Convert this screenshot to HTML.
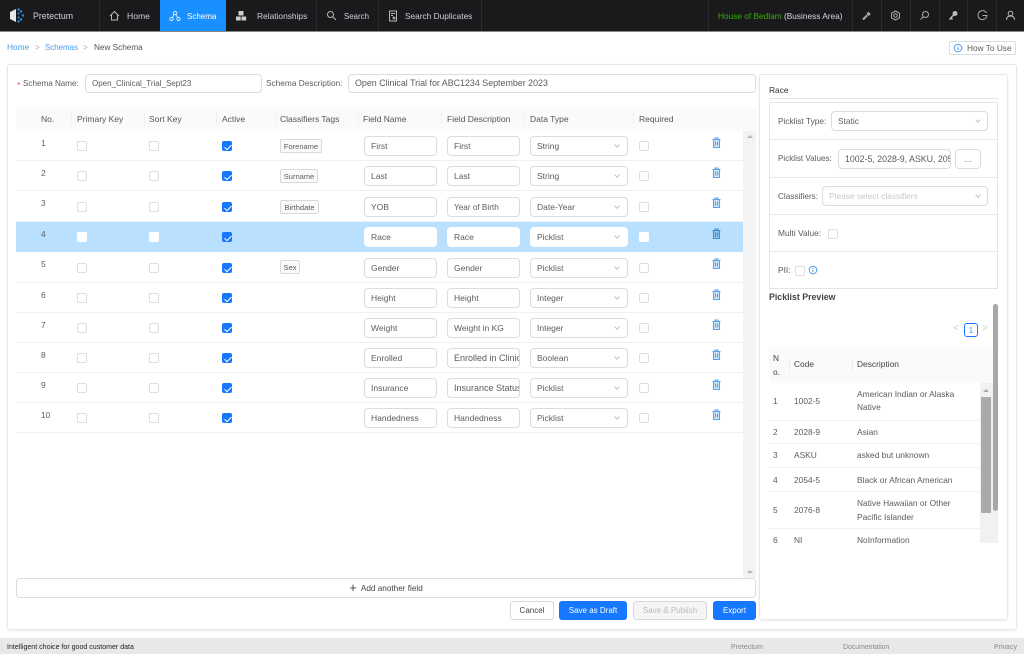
<!DOCTYPE html>
<html><head><meta charset="utf-8"><style>
*{box-sizing:border-box}
html,body{margin:0;padding:0;width:1024px;height:654px;overflow:hidden;background:#fff}
body{font:8.4px/12px "Liberation Sans",sans-serif;color:#5c5c5c;position:relative}
#w{position:absolute;left:0;top:0;width:1024px;height:654px;overflow:hidden;filter:blur(.3px)}
.t{position:absolute;white-space:nowrap;line-height:12px}
.nav{color:#cdd1d5}
.sep{position:absolute;top:0;width:1px;height:31px;background:#2b2b2e}
.ic{position:absolute;fill:none;stroke:#b8b8b8;stroke-width:1}
.th{position:absolute;top:113px;color:#555;white-space:nowrap;font-size:8.5px}
.hs{position:absolute;top:113px;width:1px;height:12px;background:#f0f0f0}
.row{position:absolute;left:16px;width:727px;height:30px;border-bottom:1px solid #f0f0f0}
.row>*{position:absolute}
.no{left:25px;top:6px}
.cb{width:10px;height:10px;border:1px solid #dedede;border-radius:2px;background:#fff;top:10px}
.on{background:#1677ff;border-color:#1677ff}
.on:after{content:"";position:absolute;left:2.500px;top:.5px;width:3px;height:6px;border:solid #fff;border-width:0 1px 1px 0;transform:rotate(45deg)}
.tag{left:264px;top:8px;height:14px;border:1px solid #d9d9d9;border-radius:2px;background:#fafafa;font-size:7.500px;line-height:13px;text-align:center}
.in{height:20px;top:5px;border:1px solid #dcdcdc;border-radius:4px;background:#fff;padding:0 6px;line-height:18px;overflow:hidden;white-space:nowrap;font-size:8.500px}
.chev{position:absolute;width:4px;height:4px;border:solid #c4c4c4;border-width:0 1px 1px 0;transform:rotate(45deg)}
.tr{left:696px;top:6px}
.box{position:absolute;border:1px solid #dcdcdc;border-radius:4px;background:#fff;line-height:18px;padding:0 6px;white-space:nowrap;overflow:hidden}
.btn{position:absolute;top:601px;height:19px;border-radius:3px;text-align:center;line-height:19px;background:#1677ff;color:#fff;font-size:8px}
.hl{position:absolute;left:770px;width:228px;height:1px;background:#e6e6e6}
.pl{position:absolute;left:769px;width:211px;height:1px;background:#f0f0f0}
</style></head><body><div id="w">

<div style="position:absolute;left:0;top:0;width:1024px;height:32px;background:#1a1a1d;border-bottom:1px solid #888"></div>
<div style="position:absolute;left:160px;top:0;width:66px;height:31px;background:#1890ff"></div>
<div class="sep" style="left:99px"></div><div class="sep" style="left:316px"></div><div class="sep" style="left:378px"></div><div class="sep" style="left:481px"></div><div class="sep" style="left:708px"></div><div class="sep" style="left:852px"></div><div class="sep" style="left:881px"></div><div class="sep" style="left:910px"></div><div class="sep" style="left:939px"></div><div class="sep" style="left:967px"></div><div class="sep" style="left:996px"></div>

<svg class="ic" style="left:8px;top:7px;stroke:none" width="17" height="17"><path d="M8 2V15L2 12V5Z" fill="#e8e8e8"/><circle cx="10.500" cy="2.500" r="1.200" fill="#2a8fe0"/><circle cx="13" cy="4.500" r="1.200" fill="#2a8fe0"/><circle cx="10.500" cy="6.500" r="1" fill="#2a8fe0"/><circle cx="15" cy="8.500" r="1.200" fill="#2a8fe0"/><circle cx="10.500" cy="10.500" r="1" fill="#2a8fe0"/><circle cx="13" cy="12.500" r="1.200" fill="#2a8fe0"/><circle cx="10.500" cy="14.500" r="1.200" fill="#2a8fe0"/></svg>
<div class="t nav" style="left:33px;top:10px;font-size:8.800px">Pretectum</div>

<svg class="ic" style="left:109px;top:10px" width="11" height="11"><path d="M1 6L5.500 1.500L10 6M2.500 5V10H8.500V5"/></svg>
<div class="t nav" style="left:127px;top:10px;font-size:8.600px">Home</div>
<svg class="ic" style="left:169px;top:10px;stroke:#cfe6ff" width="12" height="12"><circle cx="6" cy="3" r="1.600"/><circle cx="2.500" cy="9" r="1.600"/><circle cx="9.500" cy="9" r="1.600"/><path d="M5 4.500L3.500 7.500M7 4.500L8.500 7.500"/></svg>
<div class="t" style="left:187px;top:11px;color:#fff;font-size:8px">Schema</div>
<svg class="ic" style="left:235px;top:10px;stroke:none;fill:#cfcfcf" width="12" height="12"><rect x="3.500" y="1" width="5" height="4.500"/><rect x="1" y="6.500" width="4.700" height="4"/><rect x="6.500" y="6.500" width="4.700" height="4"/></svg>
<div class="t nav" style="left:257px;top:10px;font-size:8.400px">Relationships</div>
<svg class="ic" style="left:326px;top:10px" width="11" height="11"><circle cx="4.500" cy="4.500" r="3"/><path d="M7 7L10 10"/></svg>
<div class="t nav" style="left:344px;top:11px;font-size:7.900px">Search</div>
<svg class="ic" style="left:388px;top:10px" width="10" height="12"><path d="M1.500 1H8.500V11H1.500ZM3 3.500H7M3 5.500H5"/><circle cx="6" cy="8" r="1"/></svg>
<div class="t nav" style="left:405px;top:10px;font-size:8.300px">Search Duplicates</div>

<div class="t" style="left:718px;top:10px;color:#3aa80f;font-size:8.300px">House of Bedlam <span style="color:#d5d9dd">(Business Area)</span></div>

<svg class="ic" style="left:861px;top:10px;stroke:#aaa" width="11" height="11"><path d="M2 9.500L6 5.500" stroke-width="2"/><path d="M6 4L7.500 2.500L9 4L7.500 5.500Z" fill="#aaa"/></svg>
<svg class="ic" style="left:890px;top:10px;stroke:#aaa" width="11" height="11"><circle cx="5.500" cy="5.500" r="1.800"/><path d="M5.500 1L9.500 3.200V7.800L5.500 10L1.500 7.800V3.200Z"/></svg>
<svg class="ic" style="left:919px;top:10px;stroke:#aaa" width="11" height="11"><circle cx="6.500" cy="4.500" r="3"/><path d="M4.500 6.500L1.500 9.500"/></svg>
<svg class="ic" style="left:948px;top:10px;stroke:#bbb" width="11" height="11"><circle cx="7" cy="3.500" r="2" fill="#bbb"/><path d="M5.500 5L1.500 9.500M3 8L4.500 9.500" stroke-width="1.500"/></svg>
<svg class="ic" style="left:977px;top:10px;stroke:#aaa" width="11" height="11"><path d="M9.500 3A4.500 4.500 0 1 0 10 5.500H5.500"/></svg>
<svg class="ic" style="left:1005px;top:10px;stroke:#bbb" width="11" height="11"><circle cx="5.500" cy="3.500" r="2.300"/><path d="M1.500 10C1.500 7.500 3 6 5.500 6S9.500 7.500 9.500 10"/></svg>

<div class="t" style="left:7px;top:41px;color:#4a9bf0;font-size:8.300px">Home</div>
<div class="t" style="left:35px;top:42px;color:#aaa;font-size:8px">&gt;</div>
<div class="t" style="left:45px;top:42px;color:#4a9bf0;font-size:7.900px">Schemas</div>
<div class="t" style="left:83px;top:42px;color:#aaa;font-size:8px">&gt;</div>
<div class="t" style="left:94px;top:42px;color:#555;font-size:8.200px">New Schema</div>

<div class="box" style="left:949px;top:41px;width:67px;height:14px;line-height:12px;padding:0 0 0 17px;border-radius:2px;font-size:8.300px">How To Use</div>
<svg class="ic" style="left:953px;top:43px;stroke:#4a9bf0" width="10" height="10" viewBox="0 0 10 10"><circle cx="5" cy="5" r="3.800"/><path d="M5 4.500V7M5 3V3.700"/></svg>

<div style="position:absolute;left:7px;top:64px;width:1010px;height:566px;border:1px solid #e8e8e8;border-radius:3px;box-shadow:0 1px 2px rgba(0,0,0,.08)"></div>

<div class="t" style="left:17px;top:79px;color:#ff4d4f">*</div>
<div class="t" style="left:23px;top:78px;font-size:8.100px">Schema Name:</div>
<div class="box" style="left:85px;top:74px;width:177px;height:19px;line-height:17px;font-size:8px">Open_Clinical_Trial_Sept23</div>
<div class="t" style="left:266px;top:77px;font-size:8.300px">Schema Description:</div>
<div class="box" style="left:348px;top:74px;width:408px;height:19px;line-height:17px;font-size:8.900px">Open Clinical Trial for ABC1234 September 2023</div>

<div style="position:absolute;left:16px;top:107px;width:740px;height:24px;background:#fafafa"></div>
<div class="hs" style="left:71px"></div><div class="hs" style="left:144px"></div><div class="hs" style="left:216px"></div><div class="hs" style="left:275px"></div><div class="hs" style="left:358px"></div><div class="hs" style="left:441px"></div><div class="hs" style="left:524px"></div><div class="hs" style="left:633px"></div>
<div class="th" style="left:41px">No.</div><div class="th" style="left:77px">Primary Key</div><div class="th" style="left:149px">Sort Key</div><div class="th" style="left:222px">Active</div><div class="th" style="left:280px">Classifiers Tags</div><div class="th" style="left:363px">Field Name</div><div class="th" style="left:447px">Field Description</div><div class="th" style="left:530px">Data Type</div><div class="th" style="left:639px">Required</div>

<div style="position:absolute;left:743px;top:131px;width:13px;height:447px;background:#f3f3f3"></div>
<div style="position:absolute;left:747px;top:135px;border:3px solid transparent;border-top:0;border-bottom:3px solid #b5b5b5"></div>
<div style="position:absolute;left:747px;top:571px;border:3px solid transparent;border-bottom:0;border-top:3px solid #b5b5b5"></div>

<div class="row" style="top:131px"><div class="no">1</div><div class="cb" style="left:61px"></div><div class="cb" style="left:133px"></div><div class="cb on" style="left:206px"></div><div class="tag" style="width:42px">Forename</div><div class="in" style="left:348px;width:73px">First</div><div class="in" style="left:431px;width:73px">First</div><div class="in" style="left:514px;width:98px">String<i class="chev" style="left:84px;top:6px"></i></div><div class="cb" style="left:623px"></div><svg class="tr" width="9" height="11"><path d="M.5 2.500H8.500M3 2.500V1H6V2.500M1.500 2.500V10.500H7.500V2.500M3.500 4.500V8.500M5.500 4.500V8.500" fill="#cfe6fa" stroke="#5ba6ea" stroke-width="1.100"/></svg></div>
<div class="row" style="top:161px"><div class="no">2</div><div class="cb" style="left:61px"></div><div class="cb" style="left:133px"></div><div class="cb on" style="left:206px"></div><div class="tag" style="width:38px">Surname</div><div class="in" style="left:348px;width:73px">Last</div><div class="in" style="left:431px;width:73px">Last</div><div class="in" style="left:514px;width:98px">String<i class="chev" style="left:84px;top:6px"></i></div><div class="cb" style="left:623px"></div><svg class="tr" width="9" height="11"><path d="M.5 2.500H8.500M3 2.500V1H6V2.500M1.500 2.500V10.500H7.500V2.500M3.500 4.500V8.500M5.500 4.500V8.500" fill="#cfe6fa" stroke="#5ba6ea" stroke-width="1.100"/></svg></div>
<div class="row" style="top:191px;height:31px"><div class="no">3</div><div class="cb" style="left:61px;top:11px"></div><div class="cb" style="left:133px;top:11px"></div><div class="cb on" style="left:206px;top:11px"></div><div class="tag" style="width:39px;top:9px">Birthdate</div><div class="in" style="left:348px;width:73px;top:6px">YOB</div><div class="in" style="left:431px;width:73px;top:6px;font-size:8.200px;line-height:19px">Year of Birth</div><div class="in" style="left:514px;width:98px;top:6px">Date-Year<i class="chev" style="left:84px;top:6px"></i></div><div class="cb" style="left:623px;top:11px"></div><svg class="tr" width="9" height="11"><path d="M.5 2.500H8.500M3 2.500V1H6V2.500M1.500 2.500V10.500H7.500V2.500M3.500 4.500V8.500M5.500 4.500V8.500" fill="#cfe6fa" stroke="#5ba6ea" stroke-width="1.100"/></svg></div>
<div class="row" style="top:222px;background:#bae0ff;border-bottom:0"><div class="no">4</div><div class="cb" style="left:61px;border-color:#fff"></div><div class="cb" style="left:133px;border-color:#fff"></div><div class="cb on" style="left:206px"></div><div class="in" style="left:348px;width:73px;border-color:#fff">Race</div><div class="in" style="left:431px;width:73px;border-color:#fff">Race</div><div class="in" style="left:514px;width:98px;border-color:#fff">Picklist<i class="chev" style="left:84px;top:6px"></i></div><div class="cb" style="left:623px;border-color:#fff"></div><svg class="tr" width="9" height="11"><path d="M.5 2.500H8.500M3 2.500V1H6V2.500M1.500 2.500V10.500H7.500V2.500M3.500 4.500V8.500M5.500 4.500V8.500" fill="#8fc4ee" stroke="#3f8fd8" stroke-width="1.100"/></svg></div>
<div class="row" style="top:252px;height:31px"><div class="no">5</div><div class="cb" style="left:61px;top:11px"></div><div class="cb" style="left:133px;top:11px"></div><div class="cb on" style="left:206px;top:11px"></div><div class="tag" style="width:20px;top:8px">Sex</div><div class="in" style="left:348px;width:73px;top:6px">Gender</div><div class="in" style="left:431px;width:73px;top:6px">Gender</div><div class="in" style="left:514px;width:98px;top:6px">Picklist<i class="chev" style="left:84px;top:6px"></i></div><div class="cb" style="left:623px;top:11px"></div><svg class="tr" width="9" height="11"><path d="M.5 2.500H8.500M3 2.500V1H6V2.500M1.500 2.500V10.500H7.500V2.500M3.500 4.500V8.500M5.500 4.500V8.500" fill="#cfe6fa" stroke="#5ba6ea" stroke-width="1.100"/></svg></div>
<div class="row" style="top:283px"><div class="no">6</div><div class="cb" style="left:61px"></div><div class="cb" style="left:133px"></div><div class="cb on" style="left:206px"></div><div class="in" style="left:348px;width:73px">Height</div><div class="in" style="left:431px;width:73px">Height</div><div class="in" style="left:514px;width:98px">Integer<i class="chev" style="left:84px;top:6px"></i></div><div class="cb" style="left:623px"></div><svg class="tr" width="9" height="11"><path d="M.5 2.500H8.500M3 2.500V1H6V2.500M1.500 2.500V10.500H7.500V2.500M3.500 4.500V8.500M5.500 4.500V8.500" fill="#cfe6fa" stroke="#5ba6ea" stroke-width="1.100"/></svg></div>
<div class="row" style="top:313px"><div class="no">7</div><div class="cb" style="left:61px;top:10px"></div><div class="cb" style="left:133px;top:10px"></div><div class="cb on" style="left:206px;top:10px"></div><div class="in" style="left:348px;width:73px">Weight</div><div class="in" style="left:431px;width:73px">Weight in KG</div><div class="in" style="left:514px;width:98px">Integer<i class="chev" style="left:84px;top:6px"></i></div><div class="cb" style="left:623px;top:10px"></div><svg class="tr" width="9" height="11"><path d="M.5 2.500H8.500M3 2.500V1H6V2.500M1.500 2.500V10.500H7.500V2.500M3.500 4.500V8.500M5.500 4.500V8.500" fill="#cfe6fa" stroke="#5ba6ea" stroke-width="1.100"/></svg></div>
<div class="row" style="top:343px"><div class="no">8</div><div class="cb" style="left:61px;top:10px"></div><div class="cb" style="left:133px;top:10px"></div><div class="cb on" style="left:206px;top:10px"></div><div class="in" style="left:348px;width:73px">Enrolled</div><div class="in" style="left:431px;width:73px;font-size:9px">Enrolled in Clinical</div><div class="in" style="left:514px;width:98px">Boolean<i class="chev" style="left:84px;top:6px"></i></div><div class="cb" style="left:623px;top:10px"></div><svg class="tr" width="9" height="11"><path d="M.5 2.500H8.500M3 2.500V1H6V2.500M1.500 2.500V10.500H7.500V2.500M3.500 4.500V8.500M5.500 4.500V8.500" fill="#cfe6fa" stroke="#5ba6ea" stroke-width="1.100"/></svg></div>
<div class="row" style="top:373px"><div class="no">9</div><div class="cb" style="left:61px;top:10px"></div><div class="cb" style="left:133px;top:10px"></div><div class="cb on" style="left:206px;top:10px"></div><div class="in" style="left:348px;width:73px">Insurance</div><div class="in" style="left:431px;width:73px;font-size:9px">Insurance Status</div><div class="in" style="left:514px;width:98px">Picklist<i class="chev" style="left:84px;top:6px"></i></div><div class="cb" style="left:623px;top:10px"></div><svg class="tr" width="9" height="11"><path d="M.5 2.500H8.500M3 2.500V1H6V2.500M1.500 2.500V10.500H7.500V2.500M3.500 4.500V8.500M5.500 4.500V8.500" fill="#cfe6fa" stroke="#5ba6ea" stroke-width="1.100"/></svg></div>
<div class="row" style="top:403px"><div class="no" style="left:25px">10</div><div class="cb" style="left:61px;top:10px"></div><div class="cb" style="left:133px;top:10px"></div><div class="cb on" style="left:206px;top:10px"></div><div class="in" style="left:348px;width:73px">Handedness</div><div class="in" style="left:431px;width:73px">Handedness</div><div class="in" style="left:514px;width:98px">Picklist<i class="chev" style="left:84px;top:6px"></i></div><div class="cb" style="left:623px;top:10px"></div><svg class="tr" width="9" height="11"><path d="M.5 2.500H8.500M3 2.500V1H6V2.500M1.500 2.500V10.500H7.500V2.500M3.500 4.500V8.500M5.500 4.500V8.500" fill="#cfe6fa" stroke="#5ba6ea" stroke-width="1.100"/></svg></div>

<div class="box" style="left:16px;top:578px;width:740px;height:20px;text-align:center;line-height:18px;color:#444;font-size:8.200px"><span style="font-size:13px;vertical-align:-1px">+</span>&nbsp; Add another field</div>
<div class="btn" style="left:510px;width:44px;background:#fff;border:1px solid #d9d9d9;color:#444;line-height:17px">Cancel</div>
<div class="btn" style="left:559px;width:68px">Save as Draft</div>
<div class="btn" style="left:633px;width:74px;background:#f5f5f5;border:1px solid #d9d9d9;color:#bbb;line-height:17px">Save &amp; Publish</div>
<div class="btn" style="left:713px;width:43px">Export</div>

<div style="position:absolute;left:759px;top:74px;width:249px;height:546px;border:1px solid #e8e8e8;border-radius:3px;box-shadow:0 1px 2px rgba(0,0,0,.08)"></div>
<div class="t" style="left:769px;top:84px;color:#333">Race</div>
<div style="position:absolute;left:769px;top:98px;width:229px;height:1px;background:#e8e8e8"></div>
<div style="position:absolute;left:769px;top:102px;width:229px;height:187px;border:1px solid #e4e4e4"></div>
<div class="hl" style="top:139px"></div><div class="hl" style="top:177px"></div><div class="hl" style="top:214px"></div><div class="hl" style="top:251px"></div>

<div class="t" style="left:778px;top:115px;font-size:8.300px">Picklist Type:</div>
<div class="box" style="left:831px;top:111px;width:157px;height:20px">Static<i class="chev" style="left:144px;top:6px"></i></div>
<div class="t" style="left:778px;top:153px;font-size:8.100px">Picklist Values:</div>
<div class="box" style="left:838px;top:149px;width:113px;height:20px;font-size:8.800px">1002-5, 2028-9, ASKU, 2054-5</div>
<div class="box" style="left:955px;top:149px;width:26px;height:20px;text-align:center;padding:0">...</div>
<div class="t" style="left:778px;top:191px;font-size:8.200px">Classifiers:</div>
<div class="box" style="left:822px;top:186px;width:166px;height:20px;color:#c8c8c8">Please select classifiers<i class="chev" style="left:153px;top:6px"></i></div>
<div class="t" style="left:778px;top:227px">Multi Value:</div>
<div class="cb" style="position:absolute;left:828px;top:229px"></div>
<div class="t" style="left:778px;top:264px">PII:</div>
<div class="cb" style="position:absolute;left:795px;top:266px"></div>
<svg class="ic" style="left:808px;top:265px;stroke:#4a9bf0" width="10" height="10"><circle cx="5" cy="5" r="3.800"/><path d="M5 4.500V7M5 3V3.700"/></svg>

<div class="t" style="left:769px;top:291px;color:#444;font-weight:bold;font-size:8.800px">Picklist Preview</div>

<div class="t" style="left:953px;top:323px;color:#ccc;font-size:10px">&lt;</div>
<div style="position:absolute;left:964px;top:323px;width:14px;height:14px;border:1px solid #1677ff;border-radius:3px;text-align:center;line-height:12px;color:#4a9bf0">1</div>
<div class="t" style="left:982px;top:323px;color:#ccc;font-size:10px">&gt;</div>

<div style="position:absolute;left:769px;top:347px;width:224px;height:36px;background:#fafafa"></div>
<div style="position:absolute;left:789px;top:358px;width:1px;height:14px;background:#eee"></div>
<div style="position:absolute;left:852px;top:358px;width:1px;height:14px;background:#eee"></div>
<div class="t" style="left:773px;top:351px;line-height:14px;color:#444">N<br>o.</div>
<div class="t" style="left:794px;top:358px;color:#444">Code</div>
<div class="t" style="left:857px;top:358px;color:#444">Description</div>

<div style="position:absolute;left:980px;top:383px;width:18px;height:160px;background:#f1f1f1"></div>
<div style="position:absolute;left:981px;top:397px;width:10px;height:116px;background:#aaa"></div>
<div style="position:absolute;left:983px;top:389px;border:3px solid transparent;border-top:0;border-bottom:3px solid #aaa"></div>
<div style="position:absolute;left:993px;top:304px;width:5px;height:207px;background:#a8a8a8;border-radius:3px"></div>

<div class="pl" style="top:420px"></div><div class="pl" style="top:443px"></div><div class="pl" style="top:467px"></div><div class="pl" style="top:491px"></div><div class="pl" style="top:528px"></div>

<div class="t" style="left:773px;top:395px">1</div><div class="t" style="left:794px;top:395px">1002-5</div><div class="t" style="left:857px;top:388px;line-height:13px">American Indian or Alaska<br>Native</div>
<div class="t" style="left:773px;top:426px">2</div><div class="t" style="left:794px;top:426px">2028-9</div><div class="t" style="left:857px;top:426px">Asian</div>
<div class="t" style="left:773px;top:449px">3</div><div class="t" style="left:794px;top:449px">ASKU</div><div class="t" style="left:857px;top:449px">asked but unknown</div>
<div class="t" style="left:773px;top:474px">4</div><div class="t" style="left:794px;top:474px">2054-5</div><div class="t" style="left:857px;top:474px">Black or African American</div>
<div class="t" style="left:773px;top:504px">5</div><div class="t" style="left:794px;top:504px">2076-8</div><div class="t" style="left:857px;top:496px;line-height:14px">Native Hawaiian or Other<br>Pacific Islander</div>
<div class="t" style="left:773px;top:534px">6</div><div class="t" style="left:794px;top:534px">NI</div><div class="t" style="left:857px;top:534px">NoInformation</div>

<div style="position:absolute;left:0;top:638px;width:1024px;height:16px;background:#e8e8e8"></div>
<div class="t" style="left:7px;top:642px;font-size:7.050px;color:#222">Intelligent choice for good customer data</div>
<div class="t" style="left:731px;top:642px;font-size:7px;color:#888">Pretectum</div>
<div class="t" style="left:843px;top:642px;font-size:6.900px;color:#888">Documentation</div>
<div class="t" style="left:994px;top:642px;font-size:7px;color:#888">Privacy</div>
</div></body></html>
